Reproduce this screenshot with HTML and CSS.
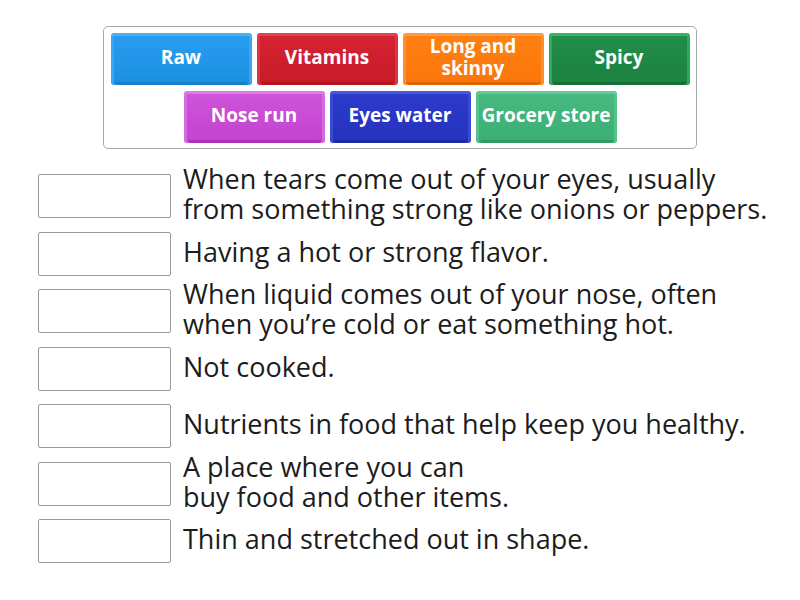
FILE: index.html
```html
<!DOCTYPE html>
<html>
<head>
<meta charset="utf-8">
<link rel="stylesheet" href="styles.css">
</head>
<body>
<div class="bank">
  <div class="tile blue">Raw</div>
  <div class="tile red">Vitamins</div>
  <div class="tile orange">Long and skinny</div>
  <div class="tile green">Spicy</div>
  <div class="tile magenta">Nose run</div>
  <div class="tile navy">Eyes water</div>
  <div class="tile teal">Grocery store</div>
</div>
<div class="list">
  <div class="row"><div class="slot"></div><div class="def">When tears come out of your eyes, usually<br>from something strong like onions or peppers.</div></div>
  <div class="row"><div class="slot"></div><div class="def">Having a hot or strong flavor.</div></div>
  <div class="row"><div class="slot"></div><div class="def">When liquid comes out of your nose, often<br>when you’re cold or eat something hot.</div></div>
  <div class="row"><div class="slot"></div><div class="def">Not cooked.</div></div>
  <div class="row"><div class="slot"></div><div class="def">Nutrients in food that help keep you healthy.</div></div>
  <div class="row"><div class="slot"></div><div class="def">A place where you can<br>buy food and other items.</div></div>
  <div class="row"><div class="slot"></div><div class="def">Thin and stretched out in shape.</div></div>
</div>
</body>
</html>
```
FILE: styles.css
```css
html, body {
  margin: 0;
  padding: 0;
  background: #fff;
  font-family: "Open Sans", "Liberation Sans", sans-serif;
}
.bank {
  box-sizing: border-box;
  width: 594px;
  height: 123px;
  margin: 26px 0 0 103px;
  border: 1px solid #a8a8a8;
  border-radius: 5px;
  padding: 6px 6px;
  display: flex;
  flex-wrap: wrap;
  justify-content: center;
  align-content: flex-start;
  gap: 6px 5px;
}
.tile {
  box-sizing: border-box;
  width: 141px;
  height: 52px;
  border-radius: 4px;
  display: flex;
  align-items: center;
  justify-content: center;
  text-align: center;
  color: #fff;
  font-weight: 700;
  font-size: 19px;
  line-height: 22px;
  padding: 0 4px 4px;
}
.blue { background: linear-gradient(#2a9df0, #1a8fe0); box-shadow: inset 0 3px 0 #4cb1f3, inset 3px 0 0 #3aa6f0, inset -3px 0 0 #3aa6f0, inset 0 -3px 0 #177fcc; }
.red { background: linear-gradient(#d52332, #c81b2a); box-shadow: inset 0 3px 0 #e2424f, inset 3px 0 0 #dc3443, inset -3px 0 0 #dc3443, inset 0 -3px 0 #b3151f; }
.orange { background: linear-gradient(#ff8112, #fb760a); box-shadow: inset 0 3px 0 #ff9a3e, inset 3px 0 0 #ff8e2c, inset -3px 0 0 #ff8e2c, inset 0 -3px 0 #e26400; }
.green { background: linear-gradient(#218e49, #1c8240); box-shadow: inset 0 3px 0 #33b865, inset 3px 0 0 #2cab5a, inset -3px 0 0 #2cab5a, inset 0 -3px 0 #166f35; }
.magenta { background: linear-gradient(#cf55da, #c343cf); box-shadow: inset 0 3px 0 #dc7be4, inset 3px 0 0 #d66ade, inset -3px 0 0 #d66ade, inset 0 -3px 0 #ac33b8; }
.navy { background: linear-gradient(#2d3bcc, #2532bd); box-shadow: inset 0 3px 0 #4756db, inset 3px 0 0 #3a48d4, inset -3px 0 0 #3a48d4, inset 0 -3px 0 #1d28a4; }
.teal { background: linear-gradient(#47ba81, #3cae75); box-shadow: inset 0 3px 0 #64c995, inset 3px 0 0 #55c28a, inset -3px 0 0 #55c28a, inset 0 -3px 0 #2f9a63; }
.list {
  margin: 25px 0 0 38px;
  display: flex;
  flex-direction: column;
  gap: 13.5px;
}
.row {
  height: 44px;
  display: flex;
  align-items: center;
  gap: 12px;
}
.slot {
  box-sizing: border-box;
  width: 133px;
  height: 44px;
  flex: none;
  border: 1px solid #999;
  border-radius: 2px;
  background: #fff;
}
.def {
  font-size: 27px;
  line-height: 30px;
  color: #1c1c1c;
  white-space: nowrap;
  margin-top: -4px;
}
```
